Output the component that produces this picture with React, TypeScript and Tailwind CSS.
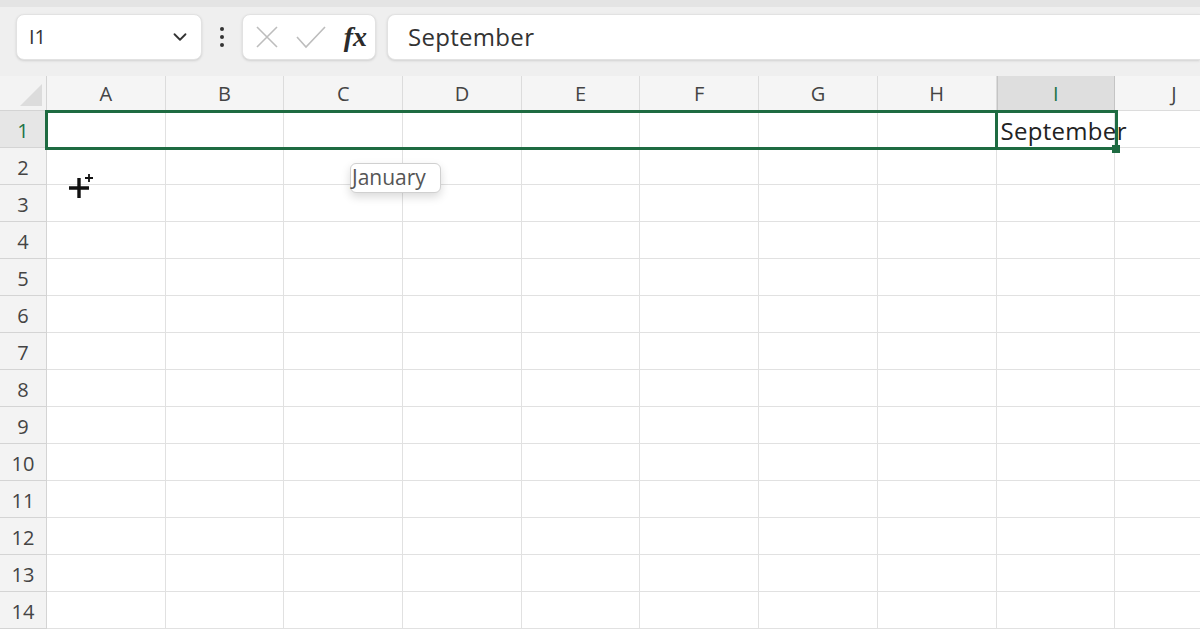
import { ChevronDown } from "lucide-react";

const COLUMNS = ["A", "B", "C", "D", "E", "F", "G", "H", "I", "J"];
const ROWS = Array.from({ length: 14 }, (_, i) => i + 1);

function CellCursor() {
  return (
    <svg width="28" height="28" viewBox="0 0 28 28" className="absolute left-[67px] top-[172px]">
      <path d="M12 6v20M2 16h20" stroke="#111" strokeWidth="3.4" />
      <path d="M22 2v8M18 6h8" stroke="#111" strokeWidth="1.8" />
    </svg>
  );
}

export default function App() {
  return (
    <main
      className="relative h-[630px] w-[1200px] overflow-hidden bg-white"
      style={{ fontFamily: '"Open Sans", "Noto Sans", sans-serif' }}
    >
      {/* formula bar */}
      <div className="flex h-[76px] flex-col bg-[#efefef]">
        <div className="h-[7px] bg-[#e4e4e4]" />
        <div className="flex items-center pl-[16px] pt-[7px]">
          <div className="flex h-[46px] w-[186px] items-center justify-between rounded-lg border border-[#e2e2e2] bg-white pl-[12px] pr-[10px] shadow-sm">
            <span className="text-[20px] text-[#333]">I1</span>
            <ChevronDown className="h-[22px] w-[22px] text-[#333]" strokeWidth={2} />
          </div>
          <div className="flex w-[40px] flex-col items-center gap-[4px]">
            <span className="h-[4px] w-[4px] rounded-full bg-[#333]" />
            <span className="h-[4px] w-[4px] rounded-full bg-[#333]" />
            <span className="h-[4px] w-[4px] rounded-full bg-[#333]" />
          </div>
          <div className="flex h-[46px] w-[134px] items-center justify-between rounded-lg border border-[#e2e2e2] bg-white pl-[12px] pr-[8px] shadow-sm">
            <svg width="24" height="24" viewBox="0 0 24 24">
              <path d="M2 2l20 20M22 2L2 22" stroke="#bdbdbd" strokeWidth="1.6" />
            </svg>
            <svg width="32" height="24" viewBox="0 0 32 24">
              <path d="M2 12l9 10L30 2" stroke="#bdbdbd" strokeWidth="1.6" fill="none" />
            </svg>
            <span
              className="text-[28px] font-bold italic leading-none text-[#2b2b2b]"
              style={{ fontFamily: '"Liberation Serif", "DejaVu Serif", serif' }}
            >
              fx
            </span>
          </div>
          <div className="ml-[11px] flex h-[46px] flex-1 items-center rounded-l-lg border border-r-0 border-[#e2e2e2] bg-white pl-[20px] shadow-sm">
            <span className="text-[24px] tracking-[0.3px] text-[#333]">September</span>
          </div>
        </div>
      </div>

      {/* sheet grid */}
      <div className="grid grid-cols-[47px_repeat(10,118.7px)] grid-rows-[35px_repeat(14,37px)]">
        <div className="relative border-r border-b border-[#d4d4d4] bg-[#f3f3f3]">
          <div className="absolute bottom-[4px] right-[4px] h-0 w-0 border-b-[22px] border-l-[22px] border-b-[#dcdcdc] border-l-transparent" />
        </div>
        {COLUMNS.map((col) => (
          <div
            key={col}
            className={
              col === "I"
                ? "flex items-center justify-center border-x border-b border-[#c4c4c4] bg-[#dedede] pt-[2px] text-[20px] text-[#217346]"
                : "flex items-center justify-center border-r border-b border-[#dcdcdc] bg-[#f5f5f5] pt-[2px] text-[20px] text-[#444]"
            }
          >
            {col}
          </div>
        ))}
        {ROWS.map((row) => (
          <div key={row} className="contents">
            <div
              className={
                row === 1
                  ? "flex items-center justify-center border-r border-b border-[#d4d4d4] bg-[#e6e6e6] pt-[3px] text-[20px] text-[#217346]"
                  : "flex items-center justify-center border-r border-b border-[#d4d4d4] bg-[#f3f3f3] pt-[3px] text-[20px] text-[#444]"
              }
            >
              {row}
            </div>
            {COLUMNS.map((col) => (
              <div key={col} className="relative border-r border-b border-[#e1e1e1]">
                {row === 1 && col === "I" && (
                  <span className="absolute left-[4px] top-[2px] whitespace-nowrap text-[24px] tracking-[0.3px] text-[#222]">
                    September
                  </span>
                )}
              </div>
            ))}
          </div>
        ))}
      </div>

      {/* selection overlay */}
      <div className="pointer-events-none absolute left-[45px] top-[110px] h-[40px] w-[1073px] border-[3px] border-[#1e6b41]" />
      <div className="pointer-events-none absolute left-[995px] top-[110px] h-[40px] w-[123px] border-[3px] border-[#1e6b41]" />
      <div className="pointer-events-none absolute left-[1112px] top-[145px] h-[8px] w-[8px] bg-[#1e6b41]" />

      {/* drag tooltip */}
      <div className="absolute left-[350px] top-[163px] flex h-[30px] w-[91px] items-center rounded-md border border-[#d0d0d0] bg-white pl-[1px] text-[21px] text-[#555] shadow-[0_4px_10px_rgba(0,0,0,0.15)]">
        January
      </div>

      <CellCursor />
    </main>
  );
}
